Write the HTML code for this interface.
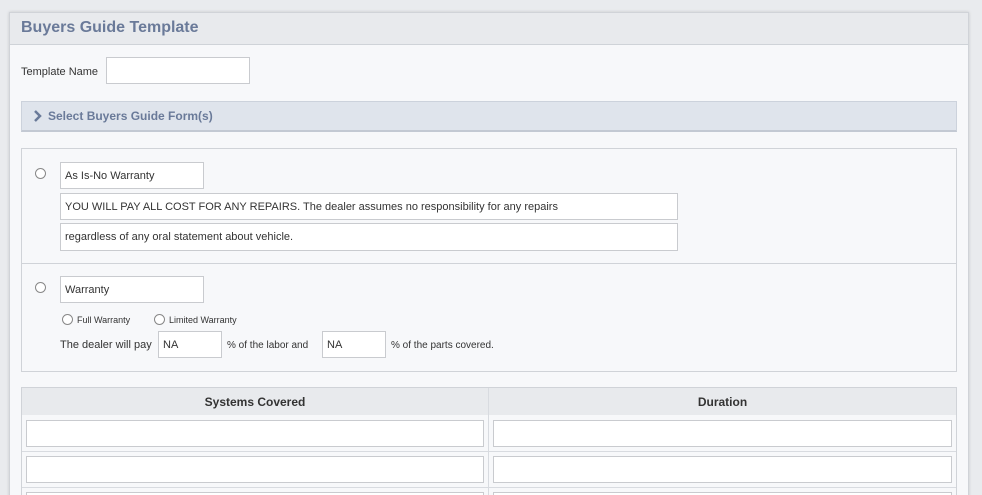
<!DOCTYPE html><html><head><style>
*{box-sizing:border-box;margin:0;padding:0}
html{width:982px;height:495px;overflow:hidden}
body{width:982px;height:495px;background:#e9ebee;font-family:"Liberation Sans",sans-serif;position:relative;overflow:hidden;color:#333}
.a{position:absolute}
.panel{left:9px;top:12px;width:960px;height:490px;background:#f7f8fa;border:1px solid #d0d3d8;box-shadow:0 0 3px rgba(0,0,0,.15)}
.hd{left:10px;top:13px;width:958px;height:32px;background:#e8eaed;border-bottom:1px solid #cfd3d8}
.in{position:absolute;background:#fff;border:1px solid #c9cbcf;font-size:11px;padding:1px 4px 0;line-height:24px;color:#333}
.rd{position:absolute;width:11px;height:11px;border:1px solid #888;border-radius:50%;background:#fff}
.t{position:absolute;font-size:11px;color:#333;white-space:nowrap}
.box{position:absolute;border:1px solid #d0d3d8}
</style></head><body>
<div class="a panel"></div>
<div class="a hd"></div>
<div class="t" style="left:21px;top:19px;font-size:16px;font-weight:bold;color:#6a7a99">Buyers Guide Template</div>
<div class="t" style="left:21px;top:66px">Template Name</div>
<div class="in" style="left:106px;top:57px;width:144px;height:27px"></div>
<div class="a" style="left:21px;top:101px;width:936px;height:31px;background:#dfe4ec;border:1px solid #ccd2dc;border-bottom:2px solid #c3c9d3"></div>
<svg class="a" style="left:33px;top:110px" width="10" height="12"><path d="M2 1 L7 6 L2 11" stroke="#6a7a99" stroke-width="2.5" fill="none"/></svg>
<div class="t" style="left:48px;top:109px;font-size:12px;font-weight:bold;color:#6a7a99">Select Buyers Guide Form(s)</div>
<div class="box" style="left:21px;top:148px;width:936px;height:224px"></div>
<div class="a" style="left:22px;top:263px;width:934px;height:1px;background:#d0d3d8"></div>
<div class="rd" style="left:35px;top:168px"></div>
<div class="in" style="left:60px;top:162px;width:144px;height:27px">As Is-No Warranty</div>
<div class="in" style="left:60px;top:193px;width:618px;height:27px">YOU WILL PAY ALL COST FOR ANY REPAIRS. The dealer assumes no responsibility for any repairs</div>
<div class="in" style="left:60px;top:223px;width:618px;height:28px">regardless of any oral statement about vehicle.</div>
<div class="rd" style="left:35px;top:282px"></div>
<div class="in" style="left:60px;top:276px;width:144px;height:27px">Warranty</div>
<div class="rd" style="left:62px;top:314px"></div>
<div class="t" style="left:77px;top:315px;font-size:9px">Full Warranty</div>
<div class="rd" style="left:154px;top:314px"></div>
<div class="t" style="left:169px;top:315px;font-size:9px">Limited Warranty</div>
<div class="t" style="left:60px;top:339px">The dealer will pay</div>
<div class="in" style="left:158px;top:331px;width:64px;height:27px">NA</div>
<div class="t" style="left:227px;top:340px;font-size:10px">% of the labor and</div>
<div class="in" style="left:322px;top:331px;width:64px;height:27px">NA</div>
<div class="t" style="left:391px;top:340px;font-size:10px">% of the parts covered.</div>
<div class="box" style="left:21px;top:387px;width:936px;height:120px;background:#f7f8fa"></div>
<div class="a" style="left:22px;top:388px;width:934px;height:27px;background:#e8eaed"></div>
<div class="a" style="left:488px;top:388px;width:1px;height:110px;background:#d8dbe0"></div>
<div class="a" style="left:22px;top:451px;width:934px;height:1px;background:#d8dbe0"></div>
<div class="a" style="left:22px;top:487px;width:934px;height:1px;background:#d8dbe0"></div>
<div class="t" style="left:22px;top:395px;width:466px;text-align:center;font-size:12px;font-weight:bold">Systems Covered</div>
<div class="t" style="left:489px;top:395px;width:467px;text-align:center;font-size:12px;font-weight:bold">Duration</div>
<div class="in" style="left:26px;top:420px;width:458px;height:27px"></div>
<div class="in" style="left:493px;top:420px;width:459px;height:27px"></div>
<div class="in" style="left:26px;top:456px;width:458px;height:27px"></div>
<div class="in" style="left:493px;top:456px;width:459px;height:27px"></div>
<div class="in" style="left:26px;top:492px;width:458px;height:27px"></div>
<div class="in" style="left:493px;top:492px;width:459px;height:27px"></div>
</body></html>
